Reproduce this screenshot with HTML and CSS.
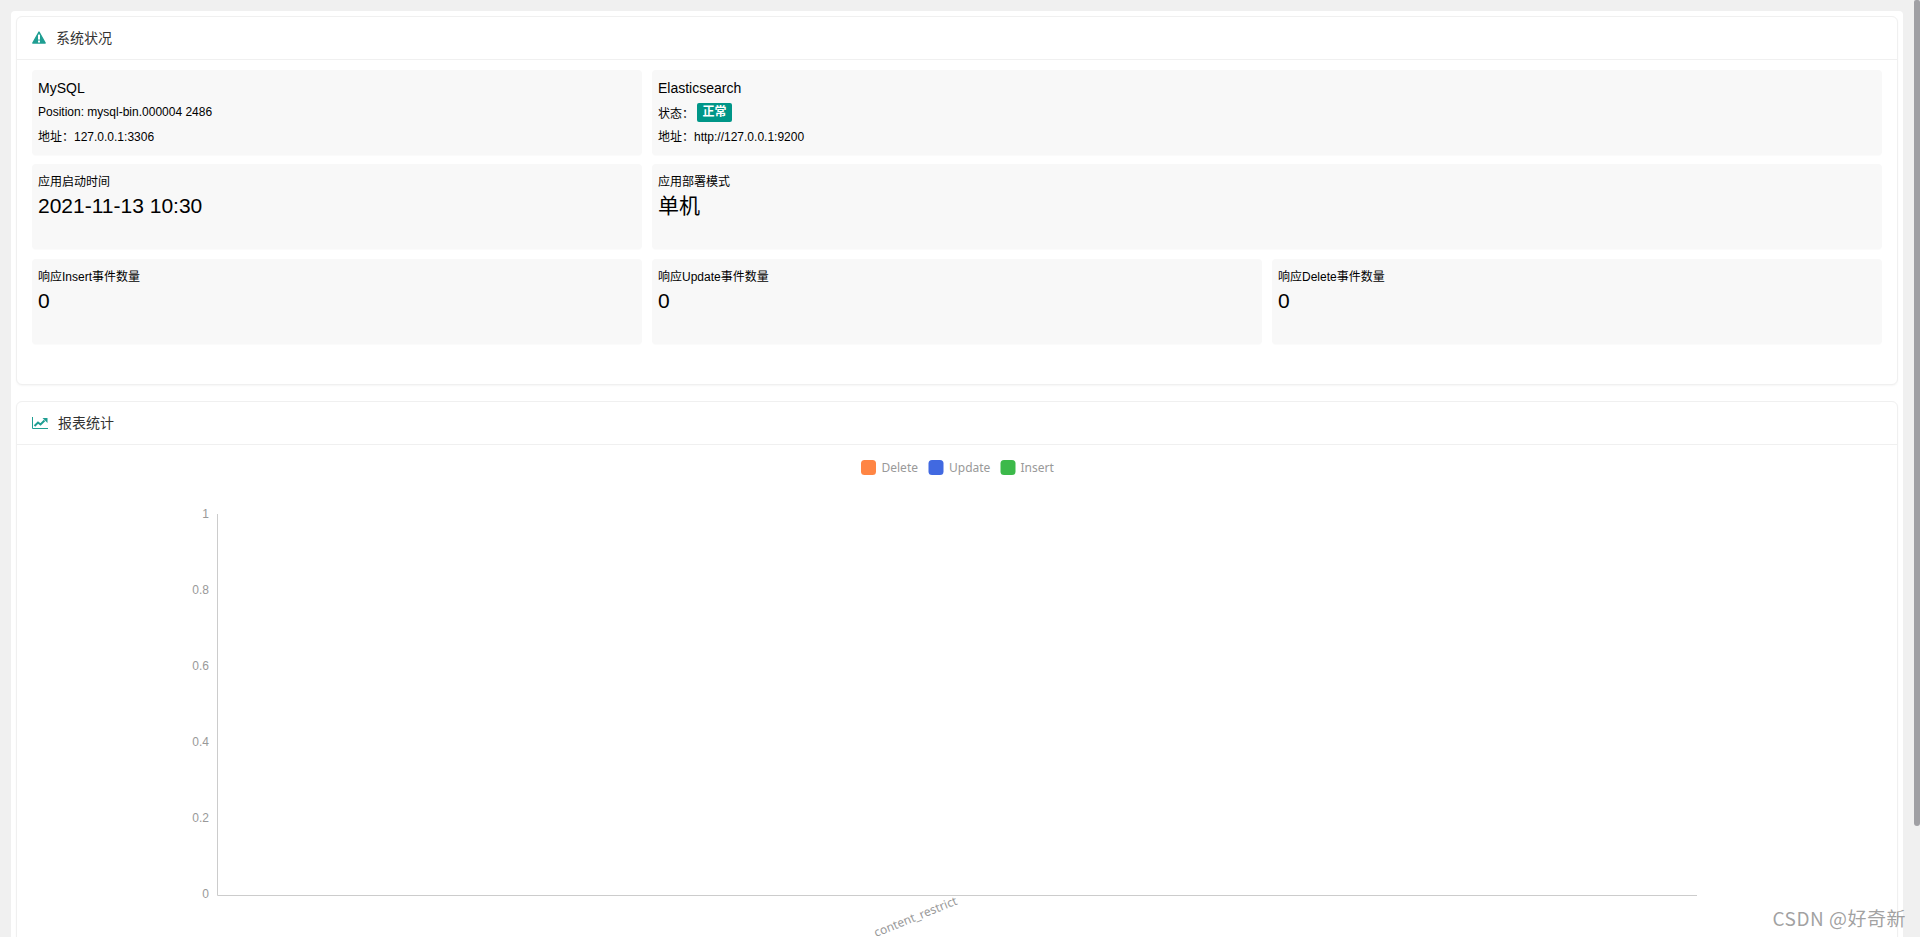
FILE: index.html
```html
<!DOCTYPE html>
<html lang="zh-CN">
<head>
<meta charset="utf-8">
<title>系统状况</title>
<link rel="stylesheet" href="styles.css">
</head>
<body>
<main class="wrapper">
  <section class="card status-card">
    <header class="card-head">
      <svg class="icon warn" viewBox="0 0 14 13" width="14" height="13"><path d="M7 1 L13.2 12 H0.8 Z" fill="#1f9e92" stroke="#1f9e92" stroke-width="1.4" stroke-linejoin="round"/><rect x="6" y="3.6" width="2" height="5" fill="#fff"/><rect x="6" y="9.500" width="2" height="2" fill="#fff"/></svg>
      <span>系统状况</span>
    </header>
    <div class="grid">
      <div class="box">
        <div class="box-title">MySQL</div>
        <div class="line">Position: mysql-bin.000004 2486</div>
        <div class="line">地址：127.0.0.1:3306</div>
      </div>
      <div class="box span2">
        <div class="box-title">Elasticsearch</div>
        <div class="line">状态：<span class="tag">正常</span></div>
        <div class="line">地址：http://127.0.0.1:9200</div>
      </div>
      <div class="box">
        <div class="stat-label">应用启动时间</div>
        <div class="stat-value">2021-11-13 10:30</div>
      </div>
      <div class="box span2">
        <div class="stat-label">应用部署模式</div>
        <div class="stat-value">单机</div>
      </div>
      <div class="box">
        <div class="stat-label">响应Insert事件数量</div>
        <div class="stat-value">0</div>
      </div>
      <div class="box">
        <div class="stat-label">响应Update事件数量</div>
        <div class="stat-value">0</div>
      </div>
      <div class="box">
        <div class="stat-label">响应Delete事件数量</div>
        <div class="stat-value">0</div>
      </div>
    </div>
  </section>
  <section class="card chart-card">
    <header class="card-head">
      <svg class="icon trend" viewBox="0 0 16 12" width="16" height="12"><path d="M0.5 0 V11.500 H16" fill="none" stroke="#1f9e92" stroke-width="1"/><path d="M2.5 9 L6 5.5 L8.5 7.500 L12.500 3.500" fill="none" stroke="#1f9e92" stroke-width="2"/><path d="M10.500 1 H15.500 V6 Z" fill="#1f9e92"/></svg>
      <span>报表统计</span>
    </header>
    <svg class="chart" viewBox="0 0 1880 520" width="1880" height="520">
      <g class="legend">
        <rect x="844" y="15" width="15" height="15" rx="3.500" fill="#ff8544"/>
        <text x="864.500" y="26.500">Delete</text>
        <rect x="911.500" y="15" width="15" height="15" rx="3.500" fill="#4169e1"/>
        <text x="932" y="26.500">Update</text>
        <rect x="983.500" y="15" width="15" height="15" rx="3.500" fill="#3cb94a"/>
        <text x="1003.500" y="26.500">Insert</text>
      </g>
      <g class="axis-labels" text-anchor="end">
        <text x="192" y="73">1</text>
        <text x="192" y="149">0.8</text>
        <text x="192" y="225">0.6</text>
        <text x="192" y="301">0.4</text>
        <text x="192" y="377">0.2</text>
        <text x="192" y="453">0</text>
      </g>
      <path class="axis" d="M200.500 69 V450.500 H1680"/>
      <text class="tick-name" text-anchor="end" transform="translate(941 459) rotate(-22)">content_restrict</text>
    </svg>
  </section>
</main>
<div class="scrollbar"></div>
<div class="watermark">CSDN @好奇新</div>
</body>
</html>
```
FILE: styles.css
```css
* { box-sizing: border-box; }
html, body { height: 100%; }
body {
  margin: 0;
  height: 937px;
  overflow: hidden;
  background: #f0f0f0;
  font-family: "Liberation Sans", "Noto Sans CJK SC", sans-serif;
  color: #000;
  position: relative;
}
.wrapper {
  margin: 11px 17px 0 11px;
  padding: 5px 5px 0;
  background: #fff;
  border-radius: 4px 4px 0 0;
}
.card {
  background: #fff;
  border: 1px solid #f0f0f0;
  border-radius: 6px;
  box-shadow: 0 1px 2px rgba(0, 0, 0, 0.04);
}
.status-card { height: 369px; margin-bottom: 16px; }
.chart-card { height: 560px; overflow: hidden; }
.card-head {
  display: flex;
  align-items: center;
  height: 43px;
  padding: 0 0 1px 15px;
  border-bottom: 1px solid #f0f0f0;
  font-size: 14px;
  color: #333;
}
.card-head span { position: relative; top: -1px; }
.icon { flex: none; }
.warn { margin-right: 10px; }
.trend { margin-right: 10px; }
.grid {
  display: grid;
  grid-template-columns: repeat(3, 1fr);
  gap: 9.4px 10px;
  padding: 10px 15px;
}
.span2 { grid-column: span 2; }
.box {
  height: 85px;
  padding: 10px 6px;
  background: #f8f8f8;
  border-radius: 4px;
  box-shadow: 0 1px 1px rgba(0, 0, 0, 0.02);
}
.box-title { font-size: 14px; line-height: 16px; margin-bottom: 4px; }
.line {
  display: flex;
  align-items: center;
  height: 24px;
  font-size: 12px;
}
.line + .line { margin-top: -1px; }
.tag {
  margin-left: 3px;
  padding: 0 5.5px;
  background: #009688;
  border-radius: 2px;
  color: #fff;
  font-size: 12px;
  font-weight: bold;
  line-height: 19px;
}
.stat-label { font-size: 12px; line-height: 16px; }
.stat-value { font-size: 21px; line-height: 32px; }
.chart { display: block; }
.legend text {
  font-family: "Noto Sans", "Noto Sans CJK SC", sans-serif;
  font-size: 12px;
  fill: #999;
}
.axis-labels {
  font-family: "Liberation Sans", sans-serif;
  font-size: 12px;
  fill: #999;
}
.tick-name {
  font-family: "Noto Sans", sans-serif;
  font-size: 12px;
  fill: #999;
}
.axis { fill: none; stroke: #ccc; stroke-width: 1; }
.scrollbar {
  position: absolute;
  top: 0;
  right: 0;
  width: 6px;
  height: 826px;
  background: #a0a0a4;
  border-radius: 2px 2px 3px 3px;
}
.watermark {
  position: absolute;
  right: 14px;
  bottom: 6px;
  font-family: "Noto Sans CJK SC", sans-serif;
  font-size: 19px;
  letter-spacing: 0.5px;
  color: rgba(120, 120, 120, 0.7);
}
```
